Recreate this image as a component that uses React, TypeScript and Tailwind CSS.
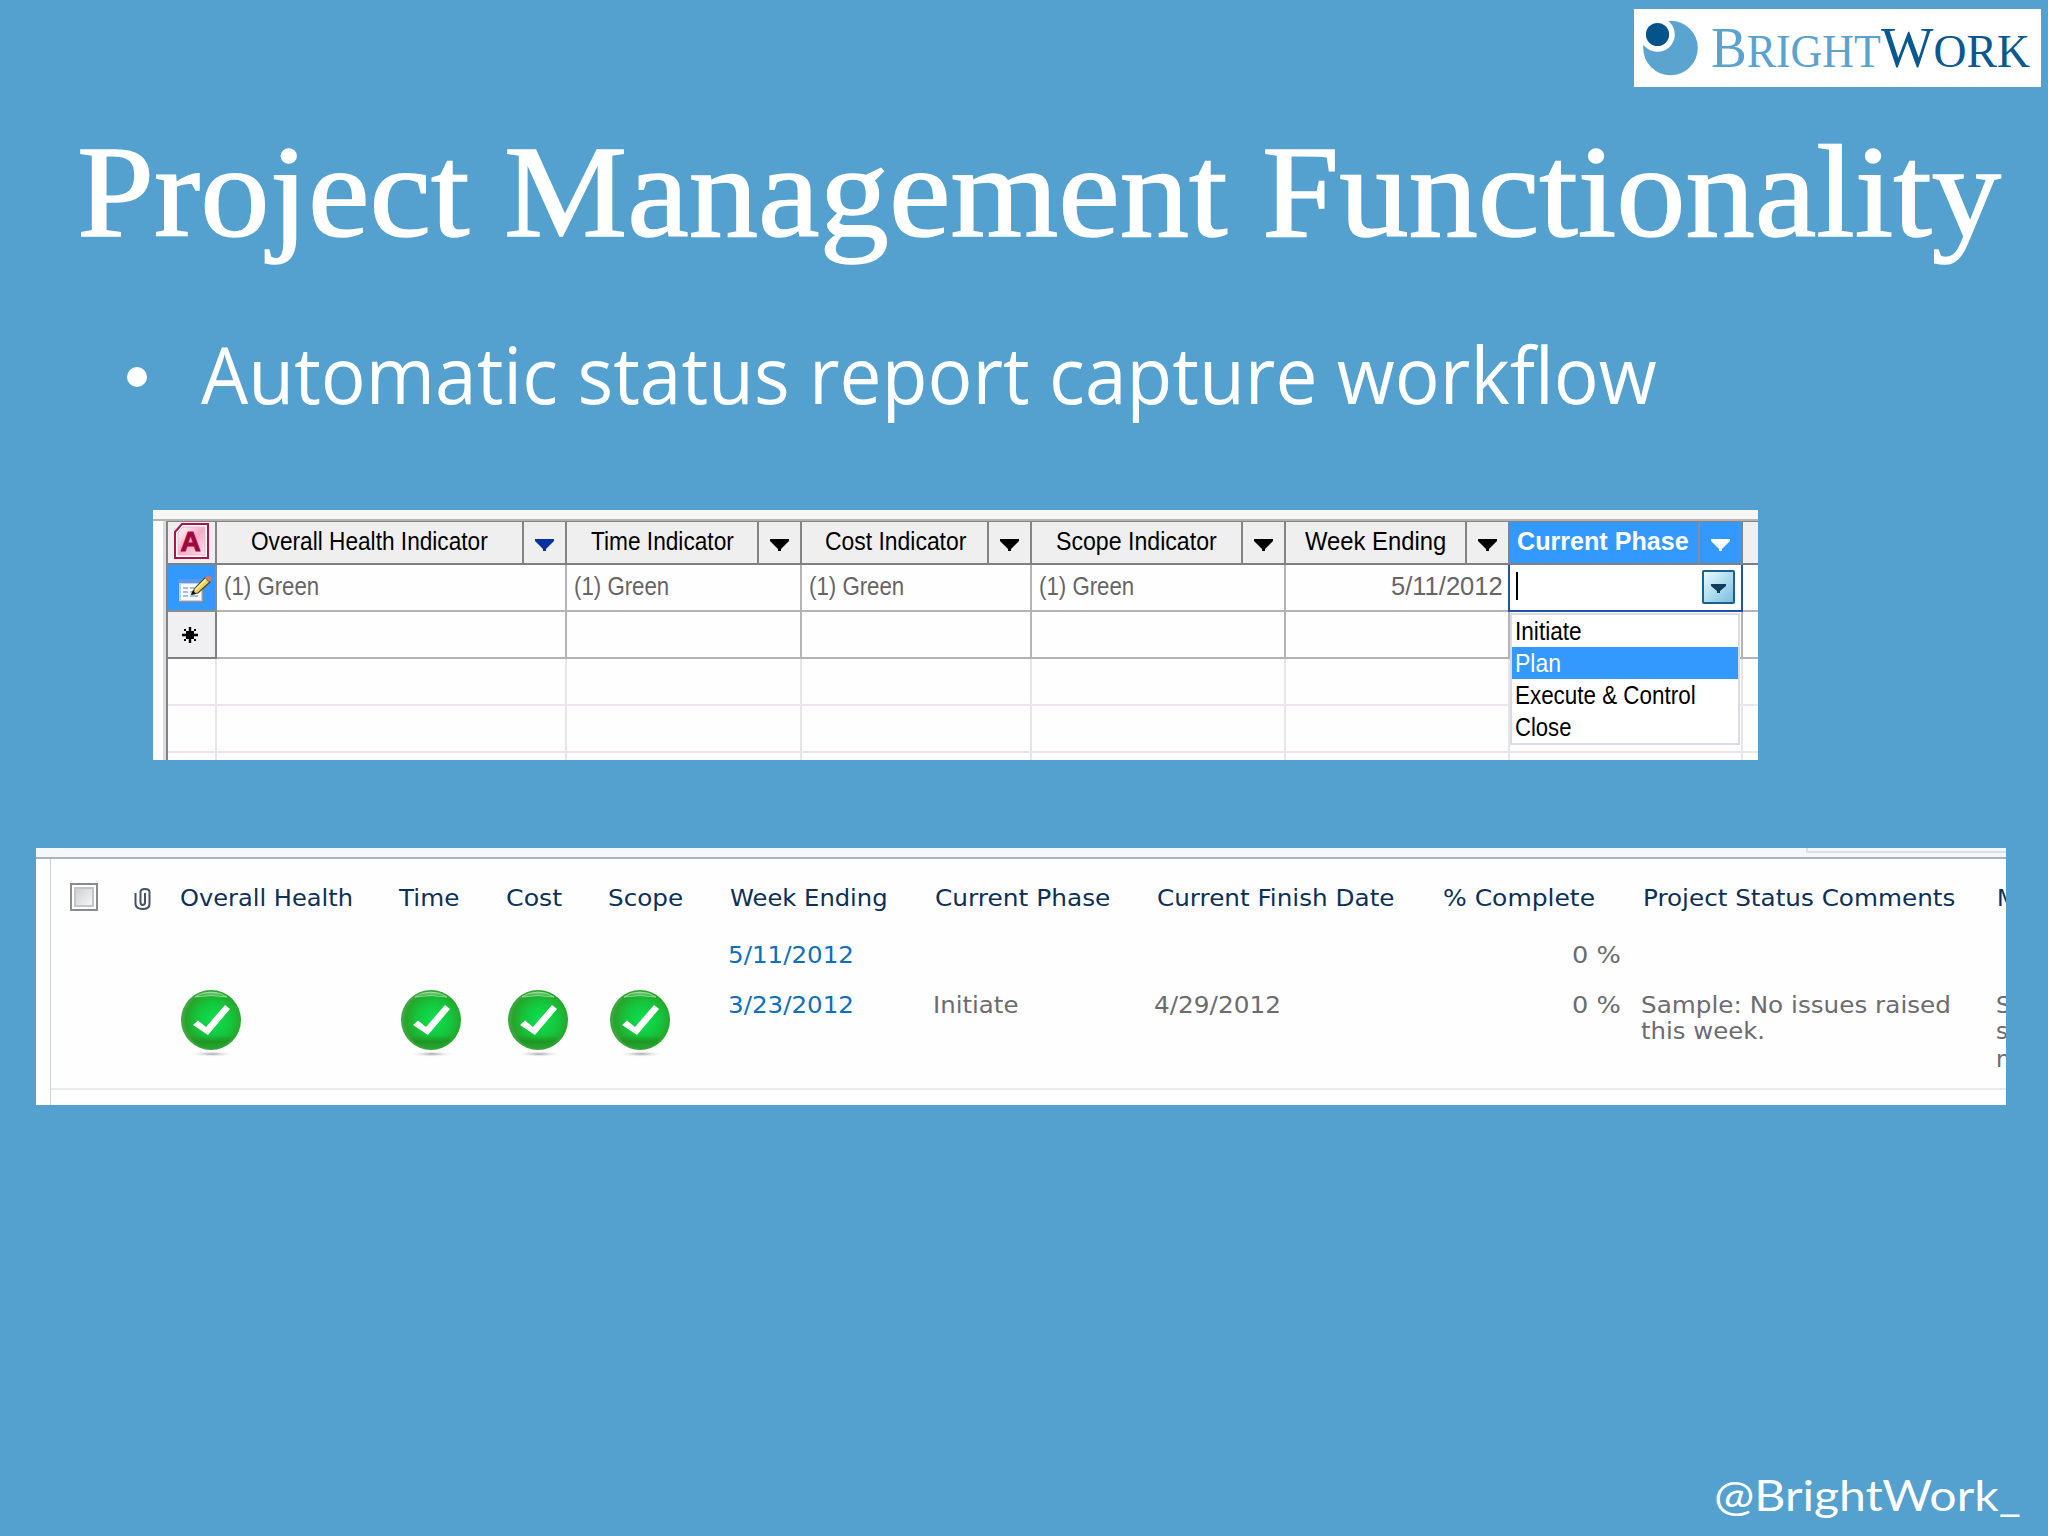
import React, { useLayoutEffect, useRef, useState } from 'react';

type FitProps = { width: number; className?: string; children: React.ReactNode };

// stretches or squeezes one line of text to the given width
function Fit({ width, className = '', children }: FitProps) {
    const ref = useRef<HTMLSpanElement>(null);
    const [scale, setScale] = useState(1);

    useLayoutEffect(() => {
        if (ref.current) {
            setScale(width / ref.current.offsetWidth);
        }
    }, [width]);

    return (
        <span className={`block shrink-0 whitespace-nowrap ${className}`} style={{ width }}>
            <span ref={ref} className="inline-block origin-left" style={{ transform: `scaleX(${scale})` }}>
                {children}
            </span>
        </span>
    );
}

function Logo() {
    return (
        <div className="flex h-[78px] w-[407px] items-center bg-white pl-[9px]">
            <svg width="55" height="56" viewBox="0 0 55 56" className="shrink-0">
                <circle cx="27.5" cy="28" r="27.3" fill="#5ba4d0" />
                <circle cx="14.5" cy="14.5" r="17.3" fill="#fff" />
                <circle cx="14.5" cy="14.5" r="11.6" fill="#04548c" />
            </svg>
            <div className="ml-[13px] flex pt-[3px] font-['Liberation_Serif',serif] text-[46px] leading-[60px]">
                <Fit width={170} className="text-[#5ba3cf]">
                    <span className="text-[56px]">B</span>RIGHT
                </Fit>
                <Fit width={149} className="text-[#0a5890]">
                    <span className="text-[56px]">W</span>ORK
                </Fit>
            </div>
        </div>
    );
}

function Arrow({ color }: { color: string }) {
    return (
        <svg width="19" height="12" viewBox="0 0 19 12" className="mt-[17px]">
            <path d="M0 0H19V2L11 10V12H8V10L0 2Z" fill={color} />
        </svg>
    );
}

function AccessIcon() {
    return (
        <svg width="35" height="36" viewBox="0 0 35 36">
            <defs>
                <linearGradient id="pink" x1="0" y1="0" x2="1" y2="1">
                    <stop offset="0" stopColor="#fff" />
                    <stop offset="0.5" stopColor="#f9a9c6" />
                    <stop offset="1" stopColor="#fbe3ec" />
                </linearGradient>
            </defs>
            <path d="M8 1H34V35H1V9Z" fill="#fff" stroke="#a8154a" strokeWidth="2" />
            <path d="M9 4H31V32H4V10Z" fill="url(#pink)" stroke="#f0b4cb" strokeWidth="1" />
            <text x="16.500" y="28" textAnchor="middle" fontFamily="Liberation Sans, sans-serif" fontWeight="bold" fontSize="28" fill="#a0083c" stroke="#a0083c" strokeWidth="1">A</text>
        </svg>
    );
}

function PencilIcon() {
    return (
        <svg width="35" height="32" viewBox="0 0 35 32">
            <rect x="1" y="6" width="24" height="23" fill="#b9d2f6" />
            <rect x="1" y="6" width="24" height="4" fill="#5f97ee" />
            <rect x="3" y="11" width="20" height="16" fill="#fff" />
            <path d="M5 15H10M12 15H16M5 19H10M12 19H16M5 23H10M12 23H20" stroke="#86aee0" strokeWidth="1.6" />
            <path d="M1 29H25V14" stroke="#7d8796" strokeWidth="1.4" fill="none" />
            <path d="M14 21L17 15L27 5L32 9L20 20Z" fill="#ecd65c" stroke="#4a432c" strokeWidth="1.2" />
            <path d="M17 17L28 6" stroke="#fff3a0" strokeWidth="1.6" />
            <path d="M27 5L29 3Q33 2 34 6L31 9Z" fill="#cf7a68" />
            <path d="M13 22L15 17L18 21Z" fill="#111" />
        </svg>
    );
}

function NewRowIcon() {
    return (
        <svg width="16" height="16" viewBox="0 0 16 16">
            <path d="M8 0V16M0 8H16" stroke="#000" strokeWidth="2.4" />
            <path d="M4 4H12V12H4Z" />
            <path d="M2 2H4V4H2ZM12 2H14V4H12ZM2 12H4V14H2ZM12 12H14V14H12Z" />
        </svg>
    );
}

const columns = [
    { label: 'Overall Health Indicator', width: 237, pad: 'pl-[34px]', value: '(1) Green', arrow: '#0831a0' },
    { label: 'Time Indicator', width: 143, pad: 'pl-[24px]', value: '(1) Green', arrow: '#000' },
    { label: 'Cost Indicator', width: 141, pad: 'pl-[23px]', value: '(1) Green', arrow: '#000' },
    { label: 'Scope Indicator', width: 161, pad: 'pl-[24px]', value: '(1) Green', arrow: '#000' },
    { label: 'Week Ending', width: 141, pad: 'pl-[19px]', value: '5/11/2012', arrow: '#000' },
];

const phases = [
    { label: 'Initiate', width: 67 },
    { label: 'Plan', width: 46 },
    { label: 'Execute & Control', width: 181 },
    { label: 'Close', width: 56 },
];

const sheetCols = 'grid grid-cols-[49px_350px_235px_230px_254px_224px_233px_15px]';

function EmptyRow({ className, line }: { className: string; line: string }) {
    return (
        <div className={`${sheetCols} ${className}`}>
            {[0, 1, 2, 3, 4, 5, 6].map((i) => (
                <div key={i} className={`border-r-2 ${line}`} />
            ))}
        </div>
    );
}

function Datasheet() {
    const [selected, setSelected] = useState('Plan');

    return (
        <div className="ml-[153px] mt-[83px] flex h-[250px] w-[1605px] flex-col overflow-hidden bg-[#fefefe] font-['Liberation_Sans',sans-serif] text-[26px]">
            <div className="h-[11px] shrink-0 border-b-2 border-[#b4b4b2] bg-[#f6f6f4]" />
            <div className="flex grow">
                <div className="w-[13px] border-r-[3px] border-[#dcdce2]" />
                <div className="flex grow flex-col border-l-2 border-t border-[#848484]">
                    <div className={`${sheetCols} h-[43px] border-b-2 border-[#808080] bg-[#f0eff0] leading-[38px]`}>
                        <div className="flex justify-center border-r-2 border-[#848484] pt-[1px]">
                            <AccessIcon />
                        </div>
                        {columns.map((c) => (
                            <div key={c.label} className="flex border-r-2 border-[#848484]">
                                <div className={`grow border-r-2 border-[#848484] ${c.pad}`}>
                                    <Fit width={c.width}>{c.label}</Fit>
                                </div>
                                <div className="flex w-[41px] shrink-0 justify-center">
                                    <Arrow color={c.arrow} />
                                </div>
                            </div>
                        ))}
                        <div className="flex border-r-2 border-[#848484] bg-[#3399ff] font-bold text-white">
                            <div className="grow border-r-2 border-[#848ea0] pl-[7px]">
                                <Fit width={172}>Current Phase</Fit>
                            </div>
                            <div className="flex w-[41px] shrink-0 justify-center">
                                <Arrow color="#fff" />
                            </div>
                        </div>
                    </div>

                    <div className={`${sheetCols} h-[47px] leading-[43px] text-[#686466]`}>
                        <div className="flex justify-end border-b-2 border-r-2 border-[#8c8c90] bg-[#3399ff] pr-[2px] pt-[8px]">
                            <PencilIcon />
                        </div>
                        {columns.map((c) => (
                            <div key={c.label} className="border-b-2 border-r-2 border-[#b5b3b8] pl-[7px]">
                                <div className={c.value === '(1) Green' ? '' : 'flex justify-end pr-[5px]'}>
                                    <Fit width={c.value === '(1) Green' ? 95 : 112}>{c.value}</Fit>
                                </div>
                            </div>
                        ))}
                        {/* active cell with its drop-down list */}
                        <div className="relative -ml-[2px] flex justify-between border-x-2 border-b-2 border-[#2350a8] bg-white pl-[6px] pr-[6px]">
                            <div className="mt-[7px] h-[28px] w-[2px] bg-black" />
                            <div className="mt-[5px] flex h-[34px] w-[33px] justify-center rounded-[2px] border-2 border-[#1d5f90] bg-linear-to-br from-[#e6fbff] to-[#78bfdc]">
                                <svg width="15" height="9" viewBox="0 0 15 9" className="mt-[12px]">
                                    <path d="M0 0H15V2L9 7V9H6V7L0 2Z" fill="#123a5c" />
                                </svg>
                            </div>
                            <div className="absolute left-0 top-[48px] z-10 w-[230px] border-2 border-[#dcdae2] bg-white text-black">
                                {phases.map((p) => (
                                    <div
                                        key={p.label}
                                        onClick={() => setSelected(p.label)}
                                        className={`h-[32px] pl-[3px] leading-[32px] ${selected === p.label ? 'bg-[#3399ff] text-white' : ''}`}
                                    >
                                        <Fit width={p.width}>{p.label}</Fit>
                                    </div>
                                ))}
                            </div>
                        </div>
                        <div className="border-b-2 border-[#b5b3b8]" />
                    </div>

                    <div className={`${sheetCols} h-[47px]`}>
                        <div className="flex items-center justify-center border-b-2 border-r-2 border-[#808080] bg-[#f0eff1] pr-1">
                            <NewRowIcon />
                        </div>
                        {[0, 1, 2, 3, 4, 5].map((i) => (
                            <div key={i} className="border-b-2 border-r-2 border-[#b5b3b8]" />
                        ))}
                        <div className="border-b-2 border-[#b5b3b8]" />
                    </div>
                    <EmptyRow className="h-[47px] border-b-2 border-[#ebe7ec]" line="border-[#e8e5ea]" />
                    <EmptyRow className="h-[47px] border-b-2 border-[#f4e2ea]" line="border-[#e8e5ea]" />
                    <EmptyRow className="h-[7px]" line="border-[#e8e5ea]" />
                </div>
            </div>
        </div>
    );
}

function Check() {
    return (
        <svg width="62" height="70" viewBox="0 0 62 70">
            <defs>
                <radialGradient id="ball" cx="0.55" cy="0.5" r="0.52">
                    <stop offset="0" stopColor="#0fe052" />
                    <stop offset="0.55" stopColor="#14c63c" />
                    <stop offset="0.9" stopColor="#27a52b" />
                    <stop offset="1" stopColor="#3ea743" />
                </radialGradient>
                <linearGradient id="shine" x1="0" y1="0" x2="0" y2="1">
                    <stop offset="0" stopColor="#c4f0c6" stopOpacity="0.7" />
                    <stop offset="1" stopColor="#60cc64" stopOpacity="0.1" />
                </linearGradient>
                <radialGradient id="ground">
                    <stop offset="0" stopColor="#a0a0a6" />
                    <stop offset="1" stopColor="#fff" stopOpacity="0" />
                </radialGradient>
                <linearGradient id="base" x1="0" y1="0" x2="0" y2="1">
                    <stop offset="0" stopColor="#1d8f20" stopOpacity="0" />
                    <stop offset="0.5" stopColor="#1d8f20" stopOpacity="0.8" />
                    <stop offset="1" stopColor="#2fa032" stopOpacity="0.3" />
                </linearGradient>
            </defs>
            <ellipse cx="32" cy="65" rx="23" ry="3" fill="url(#ground)" />
            <circle cx="31" cy="31" r="30" fill="url(#ball)" />
            <path d="M10 48Q31 44 52 48Q44 60 31 60Q18 60 10 48Z" fill="url(#base)" />
            <path d="M15 8Q22 3 31 3Q40 3 47 8Q31 5 15 8Z" fill="url(#shine)" stroke="#a8e2aa" strokeWidth="0.8" />
            <path d="M13 36L18 31.500L26 38L45 16L50 20L28 46Z" fill="#fff" />
        </svg>
    );
}

const listCols = 'grid grid-cols-[64px_45px_221px_107px_102px_120px_205px_220px_290px_197px_355px_10px]';

function StatusList() {
    return (
        <div className="ml-[36px] mt-[88px] flex h-[257px] w-[1970px] flex-col overflow-hidden bg-[#fefefe] font-['DejaVu_Sans',sans-serif] text-[23px] leading-[26px]">
            <div className="flex h-[11px] shrink-0 justify-end border-b-2 border-[#adb3ba] bg-[#f4f8fa]">
                <div className="h-[5px] w-[200px] border-b-2 border-l-2 border-[#dde1e6]" />
            </div>
            <div className="flex grow">
                <div className="w-[15px] shrink-0 border-r border-[#cdd1d9]" />
                <div className="flex grow flex-col">
                    <div className={`${listCols} h-[83px] pl-[19px] pt-[26px] text-[#0c3158]`}>
                        <div className="-mt-[2px] flex h-[28px] w-[28px] items-center justify-center border-2 border-[#8a8b8d] bg-white">
                            <div className="h-[20px] w-[20px] border-2 border-[#c4c5c9] bg-linear-to-br from-[#cfd0d5] to-[#f6f6f6]" />
                        </div>
                        <svg width="17" height="24" viewBox="0 0 17 24" className="mt-[2px]" fill="none" stroke="#465068" strokeWidth="2">
                            <path d="M1.500 6V17Q2 22 8.500 22Q15.500 22 15.500 17V5Q15.500 2 11 2Q6.500 2 6.500 5V15Q6.500 18 8.800 18Q11 18 11 15V6" />
                        </svg>
                        <Fit width={173} className="pl-[1px]">Overall Health</Fit>
                        <Fit width={60} className="-ml-[1px]">Time</Fit>
                        <Fit width={56} className="-ml-[1px]">Cost</Fit>
                        <Fit width={75} className="-ml-[1px]">Scope</Fit>
                        <Fit width={158} className="pl-[1px]">Week Ending</Fit>
                        <Fit width={175} className="pl-[1px]">Current Phase</Fit>
                        <Fit width={237} className="pl-[3px]">Current Finish Date</Fit>
                        <Fit width={152} className="-ml-[1px]">% Complete</Fit>
                        <Fit width={312} className="pl-[2px]">Project Status Comments</Fit>
                        <span className="pl-[1px]">M</span>
                    </div>
                    <div className={`${listCols} h-[50px] pl-[19px] text-[#6c6c6e]`}>
                        <Fit width={126} className="-ml-[1px] col-start-7 text-[#0d70bd]">5/11/2012</Fit>
                        <Fit width={49} className="col-start-10 ml-[128px]">0 %</Fit>
                    </div>
                    <div className={`${listCols} h-[98px] border-b-2 border-[#ebebed] pl-[19px] text-[#6c6c6e]`}>
                        <div className="col-start-3 -mt-[3px] pl-[1px]"><Check /></div>
                        <div className="-mt-[3px]"><Check /></div>
                        <div className="-mt-[3px]"><Check /></div>
                        <div className="-mt-[3px]"><Check /></div>
                        <Fit width={126} className="-ml-[1px] text-[#0d70bd]">3/23/2012</Fit>
                        <Fit width={85} className="-ml-[1px]">Initiate</Fit>
                        <Fit width={127}>4/29/2012</Fit>
                        <Fit width={49} className="ml-[128px]">0 %</Fit>
                        <div>
                            <Fit width={310}>Sample: No issues raised</Fit>
                            <Fit width={124}>this week.</Fit>
                        </div>
                        <div>
                            <div>S</div>
                            <div>s</div>
                            <div className="mt-[2px]">n</div>
                        </div>
                    </div>
                </div>
            </div>
        </div>
    );
}

export default function App() {
    return (
        <div className="flex h-[1536px] w-[2048px] flex-col overflow-hidden bg-[#54a1d0]">
            <header className="flex h-[117px] shrink-0 justify-end pr-[7px] pt-[9px]">
                <Logo />
            </header>
            <h1 className="ml-[77px] font-['Liberation_Serif',serif] text-[131px] leading-[150px] text-white [-webkit-text-stroke:1.5px_white]">
                <Fit width={1924}>Project Management Functionality</Fit>
            </h1>
            <div className="mt-[54px] flex items-center pl-[127px] font-['Open_Sans',sans-serif] text-[78px] leading-[106px] text-white">
                <div className="mr-[54px] mt-[5px] h-[20px] w-[20px] rounded-full bg-white" />
                <Fit width={1456}>Automatic status report capture workflow</Fit>
            </div>
            <Datasheet />
            <StatusList />
            <footer className="mt-auto flex justify-end pb-[15px] pr-[27px] font-['Lato',sans-serif] text-[43px] leading-[52px] text-white">
                <Fit width={307}>@BrightWork_</Fit>
            </footer>
        </div>
    );
}
